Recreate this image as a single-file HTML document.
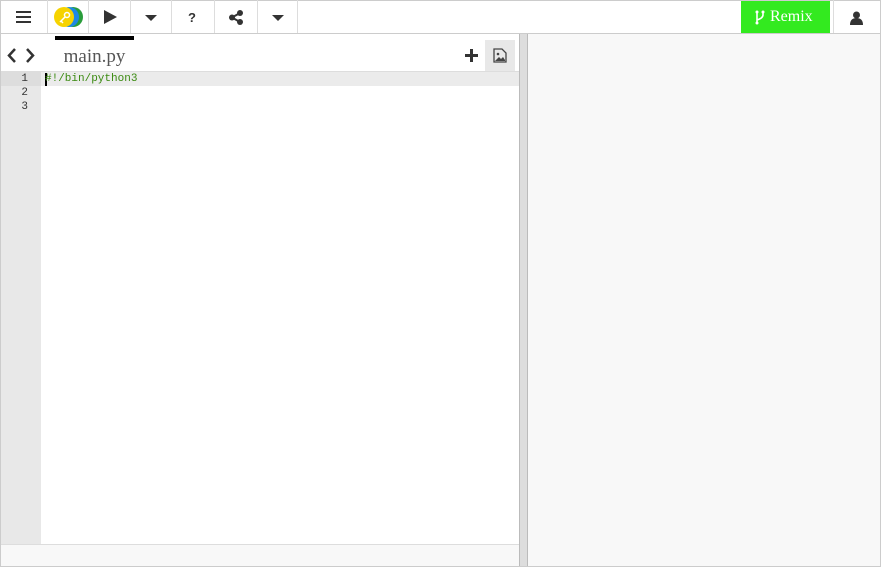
<!DOCTYPE html><html><head><style>
*{box-sizing:border-box;margin:0;padding:0}
body{width:881px;height:567px;position:relative;background:#fff;font-family:"Liberation Sans",sans-serif;overflow:hidden}
.a{position:absolute}
.sep{position:absolute;top:0;width:1px;height:33px;background:#ddd}
.code{font-family:"Liberation Mono",monospace;font-size:11px}
</style></head><body>
<div class="a" style="left:0;top:0;width:881px;height:567px;border:1px solid #ccc"></div>
<div class="a" style="left:0;top:33px;width:881px;height:1px;background:#ccc"></div>
<div class="sep" style="left:47px"></div><div class="sep" style="left:88px"></div><div class="sep" style="left:130px"></div><div class="sep" style="left:171px"></div><div class="sep" style="left:214px"></div><div class="sep" style="left:257px"></div><div class="sep" style="left:297px"></div><div class="sep" style="left:833px"></div>
<svg class="a" style="left:16px;top:11px" width="15" height="12"><rect y="0" width="15" height="2" fill="#333"/><rect y="5" width="15" height="2" fill="#333"/><rect y="10" width="15" height="2" fill="#333"/></svg>
<svg class="a" style="left:52px;top:6px" width="32" height="22"><circle cx="21" cy="11" r="10" fill="#2a9d3b"/><circle cx="17" cy="11" r="10" fill="#1e88e5"/><circle cx="12" cy="11" r="10" fill="#f6d300"/><circle cx="15" cy="9" r="2.5" fill="none" stroke="#fff" stroke-width="1.5"/><path d="M13 11 L8 16 M9 15 L11 17" stroke="#fff" stroke-width="1.5"/></svg>
<svg class="a" style="left:104px;top:10px" width="14" height="14"><path d="M0 0 L13 7 L0 14Z" fill="#333"/></svg>
<svg class="a" style="left:145px;top:15px" width="12" height="7"><path d="M0 0 L12 0 L6 6Z" fill="#333"/></svg>
<div class="a" style="left:188px;top:10px;font-weight:bold;font-size:13px;color:#333">?</div>
<svg class="a" style="left:229px;top:10px" width="15" height="15"><circle cx="11" cy="3" r="3" fill="#333"/><circle cx="3" cy="7.5" r="3" fill="#333"/><circle cx="11" cy="12" r="3" fill="#333"/><path d="M3 7.5 L11 3 M3 7.5 L11 12" stroke="#333" stroke-width="2"/></svg>
<svg class="a" style="left:272px;top:15px" width="12" height="7"><path d="M0 0 L12 0 L6 6Z" fill="#333"/></svg>
<div class="a" style="left:741px;top:1px;width:89px;height:32px;background:#33ea1f;color:#fff;font-family:'Liberation Serif',serif;font-size:16px;line-height:32px;padding-left:29px">Remix</div>
<svg class="a" style="left:755px;top:10px" width="10" height="15"><path d="M2 1 V14 M8 1 V5 Q8 8 2 10" stroke="#fff" stroke-width="1.6" fill="none"/><circle cx="2" cy="2" r="1.5" fill="#fff"/><circle cx="8" cy="2" r="1.5" fill="#fff"/><circle cx="2" cy="13" r="1.5" fill="#fff"/></svg>
<svg class="a" style="left:850px;top:11px" width="13" height="14"><circle cx="6.5" cy="4" r="3.5" fill="#333"/><path d="M0 14 Q0 7 6.5 7 Q13 7 13 14Z" fill="#333"/></svg>
<svg class="a" style="left:6px;top:48px" width="32" height="15"><path d="M9 1 L3 7.5 L9 14" stroke="#333" stroke-width="2.5" fill="none"/><path d="M21 1 L27 7.5 L21 14" stroke="#333" stroke-width="2.5" fill="none"/></svg>
<div class="a" style="left:55px;top:36px;width:79px;height:35px;background:#fff;border-top:4px solid #000;font-family:'Liberation Serif',serif;font-size:19px;color:#555;text-align:center;line-height:34px">main.py</div>
<svg class="a" style="left:465px;top:49px" width="13" height="13"><path d="M6.5 0 V13 M0 6.5 H13" stroke="#333" stroke-width="3"/></svg>
<div class="a" style="left:485px;top:40px;width:30px;height:31px;background:#e8e8e8"></div>
<svg class="a" style="left:493px;top:48px" width="14" height="15"><path d="M1 1 H9 L13 5 V14 H1Z" fill="none" stroke="#444" stroke-width="1.3"/><circle cx="5" cy="6" r="1.3" fill="#444"/><path d="M2 13 L6 9 L8 11 L10 9 L12 12 V13Z" fill="#444"/></svg>
<div class="a" style="left:1px;top:71px;width:518px;height:1px;background:#ddd"></div>
<div class="a" style="left:1px;top:72px;width:40px;height:472px;background:#e8e8e8"></div>
<div class="a" style="left:41px;top:72px;width:478px;height:14px;background:#ebebeb"></div>
<div class="a" style="left:1px;top:72px;width:40px;height:14px;background:#ddd"></div>
<div class="a code" style="left:1px;top:72px;width:27px;text-align:right;line-height:14px;color:#333">1<br>2<br>3</div>
<div class="a" style="left:45px;top:73px;width:2px;height:13px;background:#000"></div>
<div class="a code" style="left:45px;top:72px;line-height:14px;color:#3a8a10">#!/bin/python3</div>
<div class="a" style="left:1px;top:544px;width:518px;height:1px;background:#ddd"></div>
<div class="a" style="left:1px;top:545px;width:518px;height:21px;background:#f8f8f8"></div>
<div class="a" style="left:519px;top:34px;width:9px;height:532px;background:#ddd;border-left:1px solid #bbb;border-right:1px solid #bbb"></div>
<div class="a" style="left:528px;top:34px;width:352px;height:532px;background:#f8f8f8"></div>
</body></html>
